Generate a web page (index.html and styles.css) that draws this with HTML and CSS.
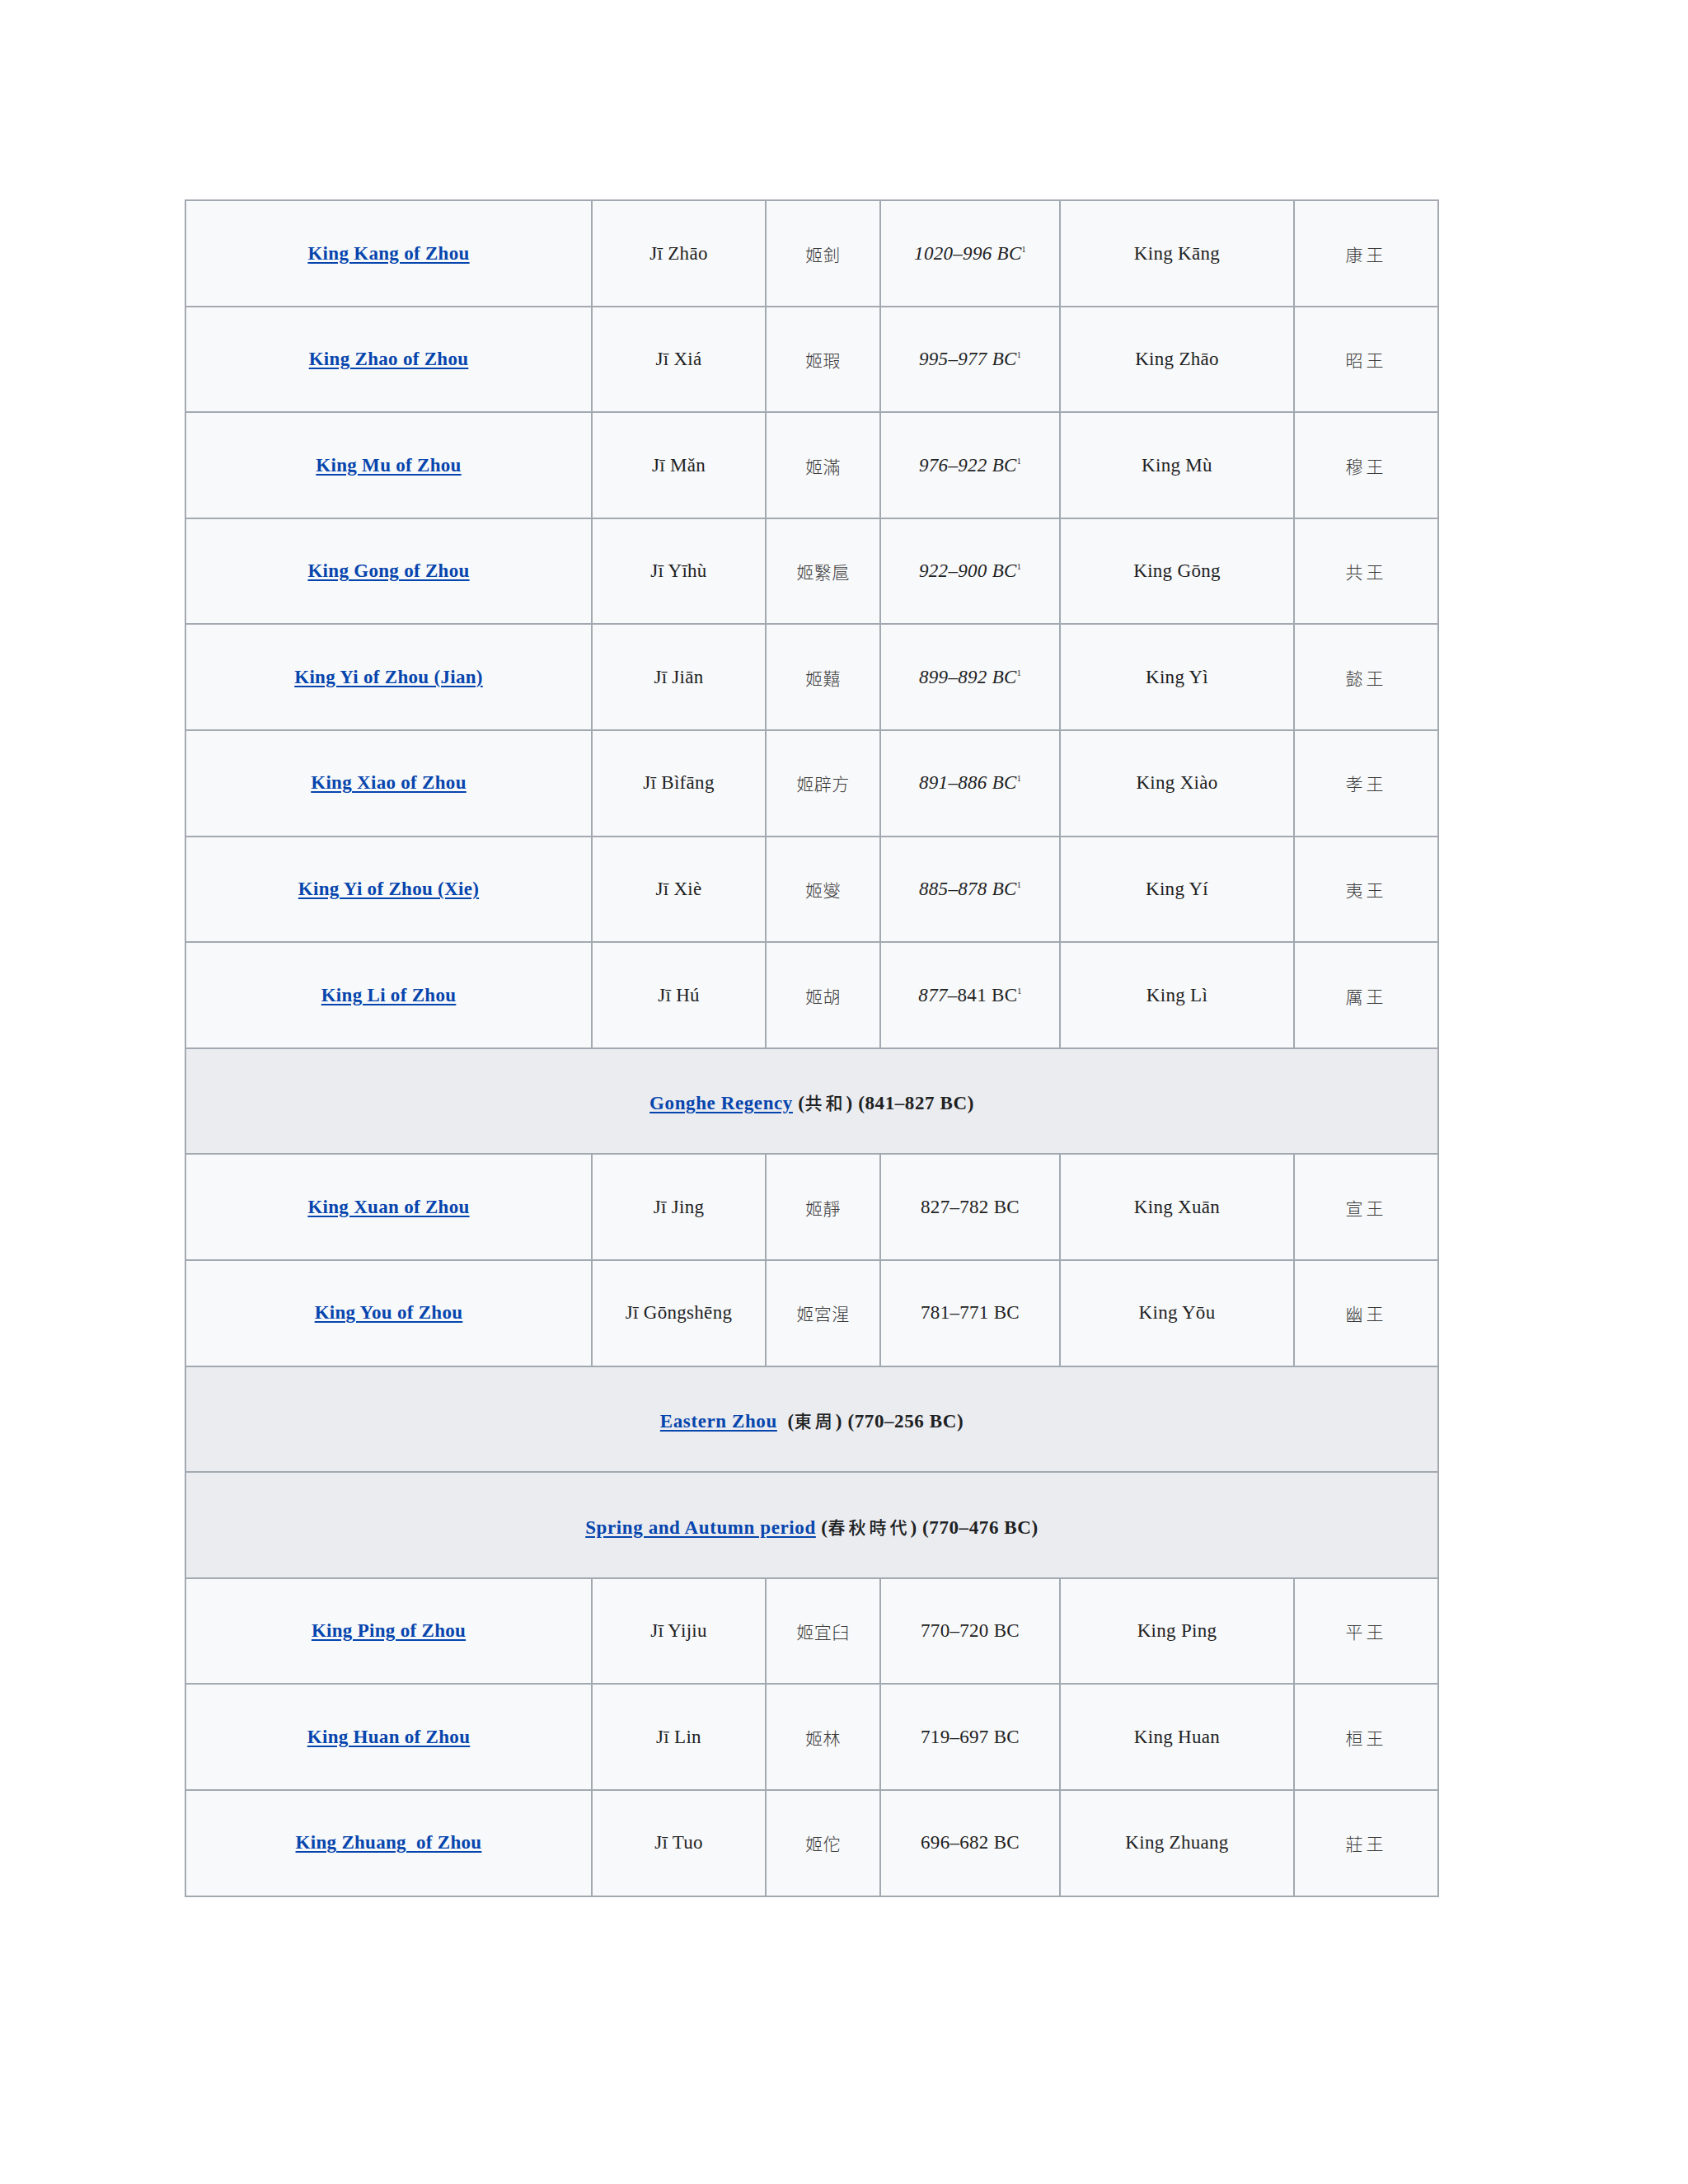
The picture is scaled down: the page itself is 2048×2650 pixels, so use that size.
FILE: index.html
```html
<!DOCTYPE html>
<html lang="en">
<head>
<meta charset="utf-8">
<title>Kings of Zhou</title>
<link rel="stylesheet" href="styles.css">
</head>
<body>
<table class="kings">
  <colgroup>
    <col class="c-name">
    <col class="c-birth">
    <col class="c-birthzh">
    <col class="c-reign">
    <col class="c-title">
    <col class="c-titlezh">
  </colgroup>
  <tbody>
    <tr>
      <td><a href="#">King Kang of Zhou</a></td>
      <td>Jī Zhāo</td>
      <td><span class="zh">姬釗</span></td>
      <td><i>1020–996 BC</i><sup>1</sup></td>
      <td>King Kāng</td>
      <td><span class="zh wide">康王</span></td>
    </tr>
    <tr>
      <td><a href="#">King Zhao of Zhou</a></td>
      <td>Jī Xiá</td>
      <td><span class="zh">姬瑕</span></td>
      <td><i>995–977 BC</i><sup>1</sup></td>
      <td>King Zhāo</td>
      <td><span class="zh wide">昭王</span></td>
    </tr>
    <tr>
      <td><a href="#">King Mu of Zhou</a></td>
      <td>Jī Mǎn</td>
      <td><span class="zh">姬滿</span></td>
      <td><i>976–922 BC</i><sup>1</sup></td>
      <td>King Mù</td>
      <td><span class="zh wide">穆王</span></td>
    </tr>
    <tr>
      <td><a href="#">King Gong of Zhou</a></td>
      <td>Jī Yīhù</td>
      <td><span class="zh">姬繄扈</span></td>
      <td><i>922–900 BC</i><sup>1</sup></td>
      <td>King Gōng</td>
      <td><span class="zh wide">共王</span></td>
    </tr>
    <tr>
      <td><a href="#">King Yi of Zhou (Jian)</a></td>
      <td>Jī Jiān</td>
      <td><span class="zh">姬囏</span></td>
      <td><i>899–892 BC</i><sup>1</sup></td>
      <td>King Yì</td>
      <td><span class="zh wide">懿王</span></td>
    </tr>
    <tr>
      <td><a href="#">King Xiao of Zhou</a></td>
      <td>Jī Bìfāng</td>
      <td><span class="zh">姬辟方</span></td>
      <td><i>891–886 BC</i><sup>1</sup></td>
      <td>King Xiào</td>
      <td><span class="zh wide">孝王</span></td>
    </tr>
    <tr>
      <td><a href="#">King Yi of Zhou (Xie)</a></td>
      <td>Jī Xiè</td>
      <td><span class="zh">姬燮</span></td>
      <td><i>885–878 BC</i><sup>1</sup></td>
      <td>King Yí</td>
      <td><span class="zh wide">夷王</span></td>
    </tr>
    <tr>
      <td><a href="#">King Li of Zhou</a></td>
      <td>Jī Hú</td>
      <td><span class="zh">姬胡</span></td>
      <td><i>877</i>–841 BC<sup>1</sup></td>
      <td>King Lì</td>
      <td><span class="zh wide">厲王</span></td>
    </tr>
    <tr class="section">
      <td colspan="6"><a href="#">Gonghe Regency</a> (<span class="zh wide">共和</span>) (841–827 BC)</td>
    </tr>
    <tr>
      <td><a href="#">King Xuan of Zhou</a></td>
      <td>Jī Jing</td>
      <td><span class="zh">姬靜</span></td>
      <td>827–782 BC</td>
      <td>King Xuān</td>
      <td><span class="zh wide">宣王</span></td>
    </tr>
    <tr>
      <td><a href="#">King You of Zhou</a></td>
      <td>Jī Gōngshēng</td>
      <td><span class="zh">姬宮湦</span></td>
      <td>781–771 BC</td>
      <td>King Yōu</td>
      <td><span class="zh wide">幽王</span></td>
    </tr>
    <tr class="section">
      <td colspan="6"><a href="#">Eastern Zhou</a>&nbsp; (<span class="zh wide">東周</span>) (770–256 BC)</td>
    </tr>
    <tr class="section">
      <td colspan="6"><a href="#">Spring and Autumn period</a> (<span class="zh wide">春秋時代</span>) (770–476 BC)</td>
    </tr>
    <tr>
      <td><a href="#">King Ping of Zhou</a></td>
      <td>Jī Yijiu</td>
      <td><span class="zh">姬宜臼</span></td>
      <td>770–720 BC</td>
      <td>King Ping</td>
      <td><span class="zh wide">平王</span></td>
    </tr>
    <tr>
      <td><a href="#">King Huan of Zhou</a></td>
      <td>Jī Lin</td>
      <td><span class="zh">姬林</span></td>
      <td>719–697 BC</td>
      <td>King Huan</td>
      <td><span class="zh wide">桓王</span></td>
    </tr>
    <tr>
      <td><a href="#">King Zhuang&nbsp; of Zhou</a></td>
      <td>Jī Tuo</td>
      <td><span class="zh">姬佗</span></td>
      <td>696–682 BC</td>
      <td>King Zhuang</td>
      <td><span class="zh wide">莊王</span></td>
    </tr>
  </tbody>
</table>
</body>
</html>
```

FILE: styles.css
```css
html, body {
  background: #ffffff;
}

body {
  margin: 8px;
  font-family: "Liberation Serif", "Times New Roman", "Noto Sans CJK TC", serif;
  font-size: 23px;
  color: #202122;
}

.kings {
  margin: 234px 0 0 216px;
  border-collapse: collapse;
  table-layout: fixed;
  width: 1520px;
}

.c-name { width: 493px; }
.c-birth { width: 211px; }
.c-birthzh { width: 139px; }
.c-reign { width: 218px; }
.c-title { width: 284px; }
.c-titlezh { width: 175px; }

.kings tr {
  height: 128.6px;
}

.kings td {
  border: 2px solid #a2a9b1;
  background: #f8f9fa;
  text-align: center;
  vertical-align: middle;
  padding: 0 6px;
  line-height: 1.2;
  letter-spacing: 0.3px;
}

.kings a {
  color: #0645ad;
  font-weight: bold;
  text-decoration: underline;
  text-decoration-thickness: 2px;
  text-underline-offset: 3px;
}

.kings sup {
  font-size: 10px;
  font-style: normal;
  vertical-align: 9px;
  line-height: 0;
}

.zh {
  font-family: "Noto Sans CJK TC", "Noto Sans CJK SC", sans-serif;
  font-size: 21px;
  font-weight: 300;
  color: #3a3a3a;
  position: relative;
  top: 2px;
}

.zh.wide {
  letter-spacing: 4px;
}

.section td {
  background: #eaecf0;
  font-weight: bold;
  padding-top: 6px;
  letter-spacing: 0.6px;
}

.section .zh {
  font-weight: 500;
  color: #202122;
  top: 0;
}
```
